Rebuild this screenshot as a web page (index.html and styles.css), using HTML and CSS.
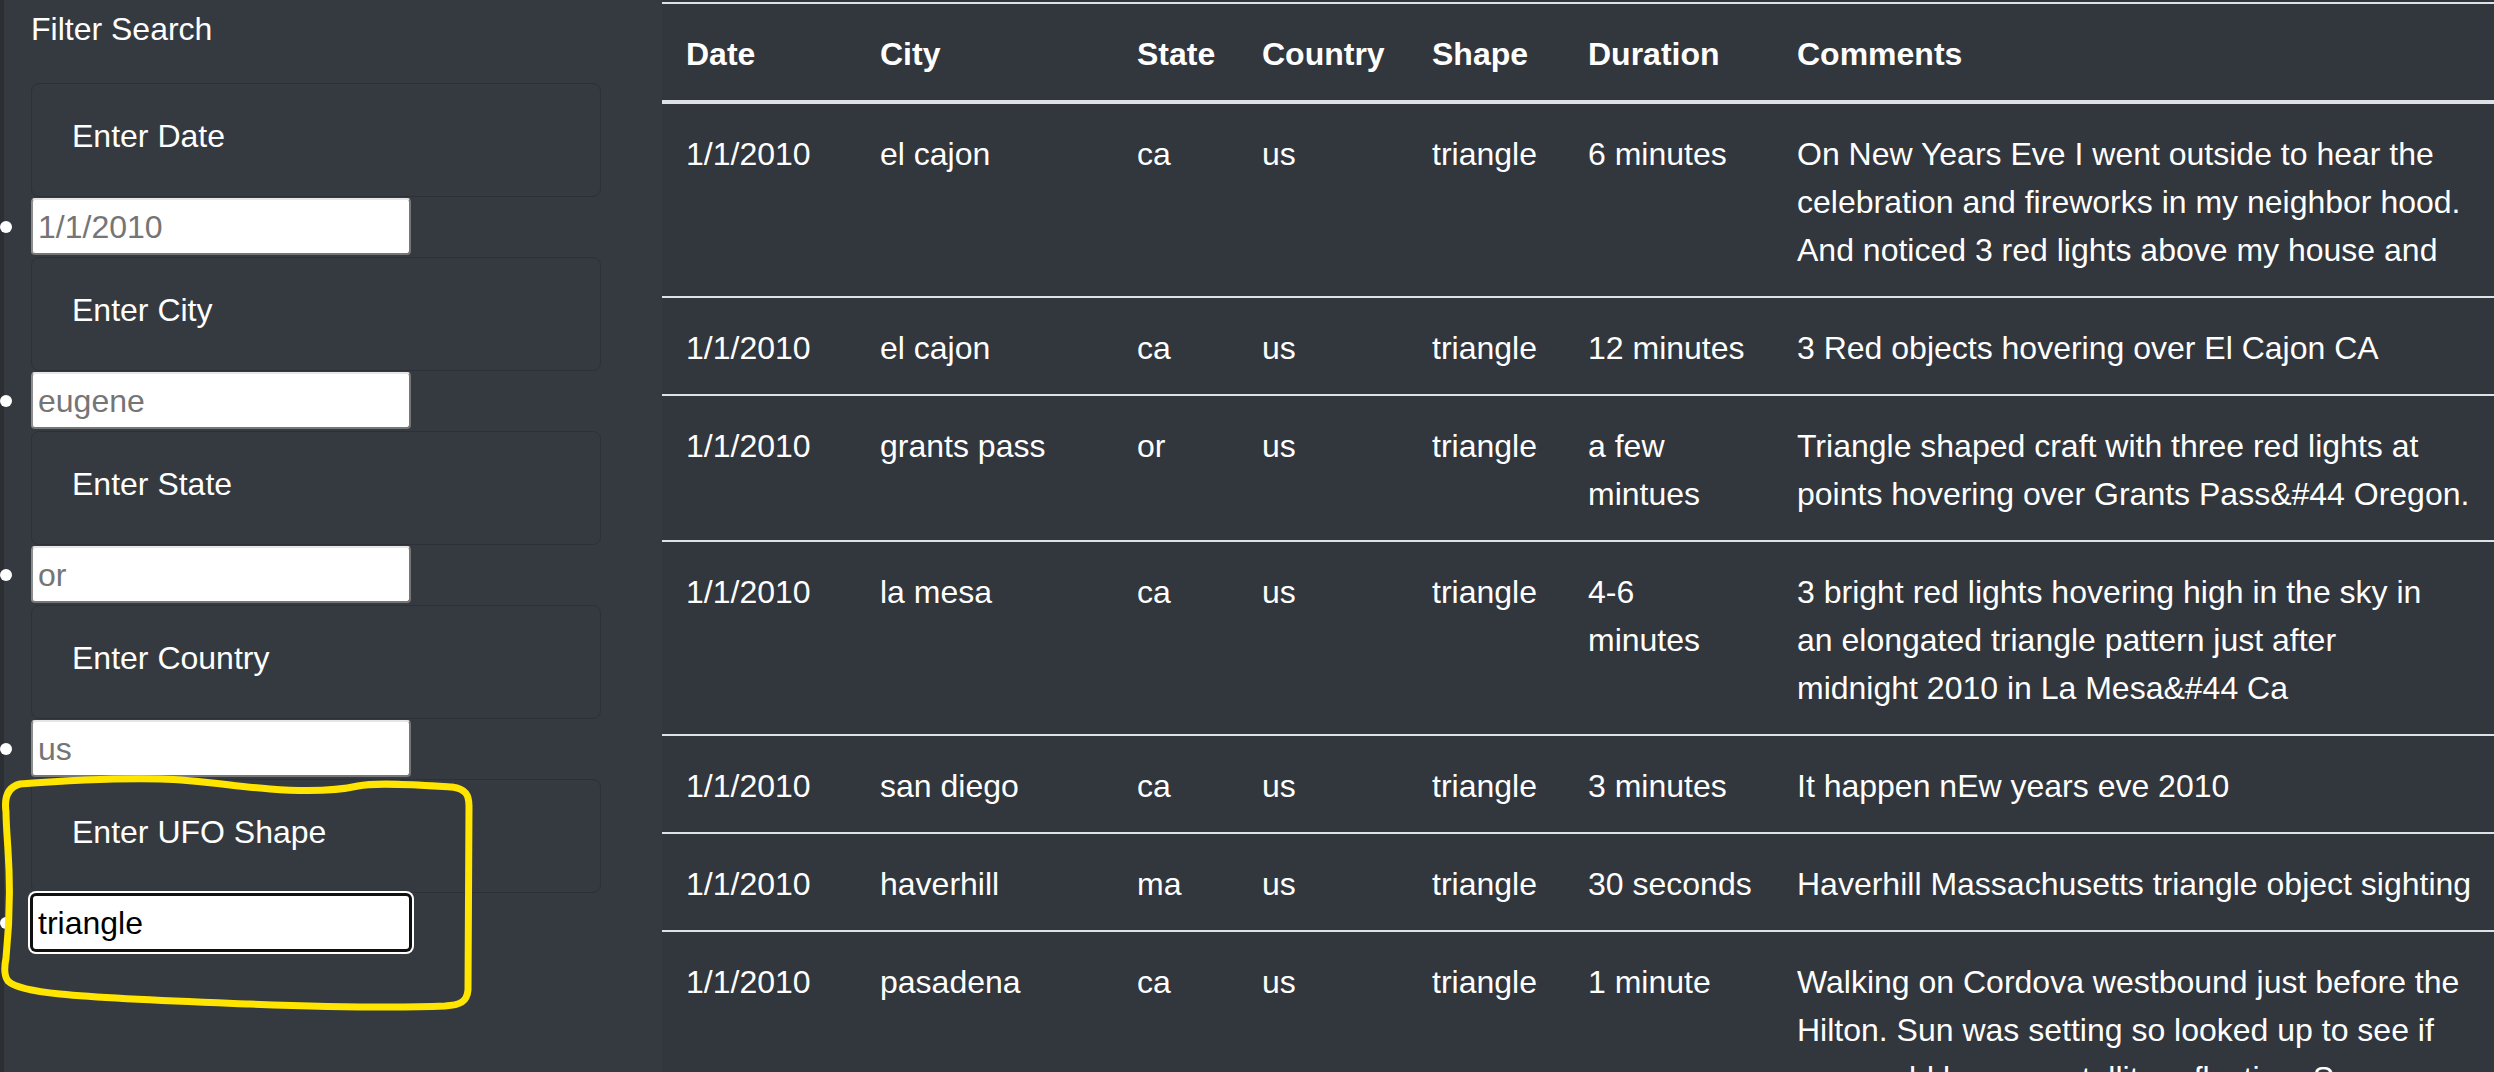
FILE: index.html
```html
<!DOCTYPE html>
<html lang="en">
<head>
<meta charset="utf-8">
<title>UFO Sightings</title>
<link rel="stylesheet" href="styles.css">
</head>
<body>
<div class="page">
  <aside class="sidebar">
    <div class="sidebar-title">Filter Search</div>
    <ul class="filters">
      <li class="filter">
        <div class="filter-card"><label for="datetime">Enter Date</label></div>
        <div class="input-row"><span class="dot"></span><input id="datetime" class="filter-input" type="text" placeholder="1/1/2010"></div>
      </li>
      <li class="filter">
        <div class="filter-card"><label for="city">Enter City</label></div>
        <div class="input-row"><span class="dot"></span><input id="city" class="filter-input" type="text" placeholder="eugene"></div>
      </li>
      <li class="filter">
        <div class="filter-card"><label for="state">Enter State</label></div>
        <div class="input-row"><span class="dot"></span><input id="state" class="filter-input" type="text" placeholder="or"></div>
      </li>
      <li class="filter">
        <div class="filter-card"><label for="country">Enter Country</label></div>
        <div class="input-row"><span class="dot"></span><input id="country" class="filter-input" type="text" placeholder="us"></div>
      </li>
      <li class="filter">
        <div class="filter-card"><label for="shape">Enter UFO Shape</label></div>
        <div class="input-row"><span class="dot"></span><input id="shape" class="filter-input is-focused" type="text" value="triangle"></div>
      </li>
    </ul>
  </aside>
  <main class="content">
    <table class="ufo-table">
      <colgroup>
        <col class="c-date"><col class="c-city"><col class="c-state"><col class="c-country"><col class="c-shape"><col class="c-duration"><col class="c-comments">
      </colgroup>
      <thead>
        <tr><th>Date</th><th>City</th><th>State</th><th>Country</th><th>Shape</th><th>Duration</th><th>Comments</th></tr>
      </thead>
      <tbody>
        <tr><td>1/1/2010</td><td>el cajon</td><td>ca</td><td>us</td><td>triangle</td><td>6 minutes</td><td>On New Years Eve I went outside to hear the<br>celebration and fireworks in my neighbor hood.<br>And noticed 3 red lights above my house and</td></tr>
        <tr><td>1/1/2010</td><td>el cajon</td><td>ca</td><td>us</td><td>triangle</td><td>12 minutes</td><td>3 Red objects hovering over El Cajon CA</td></tr>
        <tr><td>1/1/2010</td><td>grants pass</td><td>or</td><td>us</td><td>triangle</td><td>a few<br>mintues</td><td>Triangle shaped craft with three red lights at<br>points hovering over Grants Pass&amp;#44 Oregon.</td></tr>
        <tr><td>1/1/2010</td><td>la mesa</td><td>ca</td><td>us</td><td>triangle</td><td>4-6<br>minutes</td><td>3 bright red lights hovering high in the sky in<br>an elongated triangle pattern just after<br>midnight 2010 in La Mesa&amp;#44 Ca</td></tr>
        <tr><td>1/1/2010</td><td>san diego</td><td>ca</td><td>us</td><td>triangle</td><td>3 minutes</td><td>It happen nEw years eve 2010</td></tr>
        <tr><td>1/1/2010</td><td>haverhill</td><td>ma</td><td>us</td><td>triangle</td><td>30 seconds</td><td>Haverhill Massachusetts triangle object sighting</td></tr>
        <tr><td>1/1/2010</td><td>pasadena</td><td>ca</td><td>us</td><td>triangle</td><td>1 minute</td><td>Walking on Cordova westbound just before the<br>Hilton. Sun was setting so looked up to see if<br>any could be any satellite reflection. So</td></tr>
      </tbody>
    </table>
  </main>
</div>
<svg class="annotation" width="480" height="1020" viewBox="0 0 480 1020" aria-hidden="true">
  <path d="M 6 812 C 4 797, 8 787, 20 784 C 60 781, 110 778, 160 779 C 200 780, 232 786, 270 789 C 310 792, 340 790, 358 786 C 376 782, 420 785, 452 787 C 466 789, 469 795, 469 806 L 468 990 C 467 1002, 460 1005, 445 1006 C 400 1008, 330 1007, 250 1004 C 170 1001, 110 999, 60 994 C 30 991, 14 987, 8 981 C 4 976, 4 968, 6 958 C 10 920, 10 880, 8 850 C 7 835, 6 822, 6 812" />
</svg>
</body>
</html>
```
FILE: styles.css
```css
html, body {
  margin: 0;
  padding: 0;
}

body {
  width: 2494px;
  height: 1072px;
  overflow: hidden;
  background: #32363d;
  color: #fff;
  font-family: "Liberation Sans", Arial, sans-serif;
  font-size: 32px;
  line-height: 48px;
  position: relative;
}

.page {
  display: flex;
  align-items: stretch;
  height: 1072px;
}

/* ---------- sidebar ---------- */
.sidebar {
  width: 631px;
  flex: none;
  background: #353a40;
  border-left: 4px solid #2b2f34;
  padding: 5px 0 0 27px;
}

.sidebar-title {
  height: 48px;
  margin-bottom: 30px;
}

.filters {
  list-style: none;
  margin: 0;
  padding: 0;
  display: flex;
  flex-direction: column;
  gap: 2px;
}

.filter {
  display: flex;
  flex-direction: column;
  gap: 1px;
}

.filter-card {
  box-sizing: border-box;
  width: 570px;
  border: 1px solid rgba(0, 0, 0, 0.14);
  border-radius: 8px;
  padding: 28px 40px 36px;
}

.filter-card label {
  display: block;
  color: #fff;
}

.input-row {
  display: flex;
  align-items: center;
  margin-left: -31px;
}

.dot {
  width: 12px;
  height: 12px;
  border-radius: 50%;
  background: #fff;
  margin-right: 19px;
  flex: none;
}

.filter-input {
  width: 380px;
  height: 57px;
  box-sizing: border-box;
  font-family: inherit;
  font-size: 32px;
  line-height: 48px;
  padding: 3px 5px 1px;
  margin: 0;
  border: 2px solid;
  border-color: #e6e6e6 #767676 #767676 #8d8d8d;
  border-radius: 4px;
  background: #fff;
  color: #000;
  outline: none;
}

.filter-input::placeholder {
  color: #757575;
  opacity: 1;
}

.filter-input.is-focused {
  border-color: #101010;
  box-shadow: 0 0 0 1px #101010, 0 0 0 3px #fff;
  border-radius: 5px;
}

/* ---------- table ---------- */
.content {
  flex: 1;
  background: #32363d;
  overflow: hidden;
}

.ufo-table {
  table-layout: fixed;
  width: 1832px;
  border-collapse: separate;
  border-spacing: 0;
  margin-top: 2px;
}

.c-date { width: 194px; }
.c-city { width: 257px; }
.c-state { width: 125px; }
.c-country { width: 170px; }
.c-shape { width: 156px; }
.c-duration { width: 209px; }
.c-comments { width: 721px; }

.ufo-table th,
.ufo-table td {
  text-align: left;
  vertical-align: top;
  padding: 26px 24px 22px;
  white-space: nowrap;
  color: #fff;
}

.ufo-table th {
  font-weight: bold;
  border-top: 2px solid #dee2e6;
  border-bottom: 4px solid #dee2e6;
}

.ufo-table tbody tr + tr td {
  border-top: 2px solid #dee2e6;
}

/* ---------- annotation overlay ---------- */
.annotation {
  position: absolute;
  left: 0;
  top: 0;
  pointer-events: none;
}

.annotation path {
  fill: none;
  stroke: #ffe500;
  stroke-width: 7;
  stroke-linecap: round;
  stroke-linejoin: round;
}
```
